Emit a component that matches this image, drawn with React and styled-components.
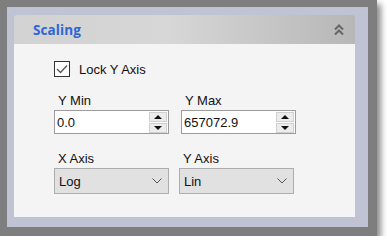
import styled, { createGlobalStyle } from 'styled-components';

const Global = createGlobalStyle`
  body {
    margin: 0;
    background: #fff;
    font-family: "Liberation Sans", Arial, sans-serif;
  }
`;

const Frame = styled.div`
  box-sizing: border-box;
  width: 377px;
  height: 236px;
  padding: 7px 9px 9px 7px;
  background: #7e7e7e;
  box-shadow: 4px 4px 6px rgba(0, 0, 0, 0.45);
  display: flex;
`;

const Backdrop = styled.div`
  flex: 1;
  display: flex;
  flex-direction: column;
  padding: 8px 13px 10px 7px;
  background: #bfc3d3;
`;

const Header = styled.div`
  height: 29px;
  display: flex;
  align-items: center;
  justify-content: space-between;
  padding: 0 11px 0 19px;
  border-radius: 3px 3px 0 0;
  background: linear-gradient(90deg, #d2d2d2 0%, #d7d7d7 45%, #b7b7b7 100%);
`;

const Title = styled.span`
  font-family: "Open Sans", "Liberation Sans", sans-serif;
  font-weight: 700;
  font-size: 13.5px;
  color: #2f66d6;
  letter-spacing: 0.1px;
`;

const Body = styled.div`
  flex: 1;
  background: #f4f4f4;
  padding: 17px 0 0 40px;
  display: flex;
  flex-direction: column;
`;

const CheckRow = styled.label`
  display: flex;
  align-items: center;
  gap: 9px;
  font-size: 13px;
  color: #111;
  height: 16px;
`;

const Box = styled.span`
  box-sizing: border-box;
  width: 16px;
  height: 16px;
  border: 1px solid #333;
  background: #fff;
  display: flex;
  align-items: center;
  justify-content: center;
`;

const Grid = styled.div`
  display: grid;
  grid-template-columns: 115px 115px;
  column-gap: ${(p) => p.gap}px;
  margin-top: ${(p) => p.top}px;
`;

const Field = styled.div`
  display: flex;
  flex-direction: column;
  gap: 2px;
`;

const Label = styled.span`
  font-size: 13px;
  line-height: 15px;
  color: #111;
  padding-left: 4px;
`;

const Spin = styled.div`
  box-sizing: border-box;
  height: 24px;
  border: 1px solid #9c9c9c;
  background: #fff;
  display: flex;
  align-items: center;
  justify-content: space-between;
  padding: 0 1px 0 2px;
  font-size: 13px;
  color: #111;
`;

const Buttons = styled.div`
  display: flex;
  flex-direction: column;
  gap: 1px;
  width: 18px;
`;

const Arrow = styled.div`
  height: 10px;
  background: #ececec;
  border: 1px solid #d0d0d0;
  box-sizing: border-box;
  display: flex;
  align-items: center;
  justify-content: center;
  &::after {
    content: '';
    border-left: 4px solid transparent;
    border-right: 4px solid transparent;
    ${(p) => (p.up ? 'border-bottom: 4px solid #111;' : 'border-top: 4px solid #111;')}
  }
`;

const Select = styled.div`
  box-sizing: border-box;
  height: 26px;
  border: 1px solid #adadad;
  background: #e1e1e1;
  display: flex;
  align-items: center;
  justify-content: space-between;
  padding: 0 6px 0 4px;
  font-size: 13px;
  color: #111;
`;

function Spinner({ value }) {
  return (
    <Spin>
      <span>{value}</span>
      <Buttons>
        <Arrow up />
        <Arrow />
      </Buttons>
    </Spin>
  );
}

function Dropdown({ value }) {
  return (
    <Select>
      <span>{value}</span>
      <svg width="10" height="6" viewBox="0 0 10 6">
        <path d="M0.5 0.5 L5 5 L9.5 0.5" fill="none" stroke="#555" strokeWidth="1" />
      </svg>
    </Select>
  );
}

export default function App() {
  return (
    <>
      <Global />
      <Frame>
        <Backdrop>
          <Header>
            <Title>Scaling</Title>
            <svg width="10" height="12" viewBox="0 0 10 12">
              <path d="M1 5.5 L5 1.5 L9 5.5 M1 10.5 L5 6.5 L9 10.5" fill="none" stroke="#666" strokeWidth="2" />
            </svg>
          </Header>
          <Body>
            <CheckRow>
              <Box>
                <svg width="12" height="10" viewBox="0 0 12 10">
                  <path d="M1 5 L4.5 8.5 L11 1.5" fill="none" stroke="#555" strokeWidth="1.3" />
                </svg>
              </Box>
              Lock Y Axis
            </CheckRow>
            <Grid gap={12} top={16}>
              <Field>
                <Label>Y Min</Label>
                <Spinner value="0.0" />
              </Field>
              <Field>
                <Label>Y Max</Label>
                <Spinner value="657072.9" />
              </Field>
            </Grid>
            <Grid gap={10} top={17}>
              <Field>
                <Label>X Axis</Label>
                <Dropdown value="Log" />
              </Field>
              <Field>
                <Label>Y Axis</Label>
                <Dropdown value="Lin" />
              </Field>
            </Grid>
          </Body>
        </Backdrop>
      </Frame>
    </>
  );
}
